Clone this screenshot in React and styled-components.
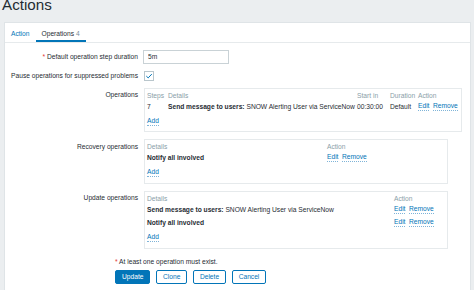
import React from 'react';
import styled, {createGlobalStyle} from 'styled-components';

const GlobalStyle = createGlobalStyle`
    html, body {
        margin: 0;
        padding: 0;
        background: #ebeef0;
    }
    body {
        font-family: "Liberation Sans", Arial, sans-serif;
        font-size: 6.67px;
        line-height: 9px;
        color: #1f2c33;
        overflow: hidden;
    }
`;

const operations = [
    {
        step: '7',
        action: 'Send message to users:',
        target: 'SNOW Alerting User via ServiceNow',
        start: '00:30:00',
        duration: 'Default'
    }
];

const recovery = [{action: 'Notify all involved'}];

const update = [
    {action: 'Send message to users:', target: 'SNOW Alerting User via ServiceNow'},
    {action: 'Notify all involved'}
];

const App = () => {
    return (
        <React.Fragment>
            <GlobalStyle/>
            <Header>
                <Title>Actions</Title>
            </Header>
            <Panel>
                <TabBar>
                    <Tab>Action</Tab>
                    <Tab $active>Operations <Count>4</Count></Tab>
                </TabBar>
                <Form>
                    <Label><Required>*</Required> Default operation step duration</Label>
                    <Field>
                        <TextInput defaultValue="5m"/>
                    </Field>

                    <Label>Pause operations for suppressed problems</Label>
                    <Field>
                        <CheckBox>
                            <svg width="8" height="8" viewBox="0 0 8 8">
                                <path d="M1.3 4.1 L3.2 5.9 L6.8 2.1" fill="none" stroke="#0275b8" strokeWidth="1"/>
                            </svg>
                        </CheckBox>
                    </Field>

                    <Label $top>Operations</Label>
                    <Field>
                        <OpBox $width={318}>
                            <HeadRow $cols="21px 189px 33px 28px 1fr">
                                <span>Steps</span>
                                <span>Details</span>
                                <span>Start in</span>
                                <span>Duration</span>
                                <span>Action</span>
                            </HeadRow>
                            {operations.map((op, i) => (
                                <DataRow key={i} $cols="21px 189px 33px 28px 1fr">
                                    <span>{op.step}</span>
                                    <span><b>{op.action}</b> {op.target}</span>
                                    <span>{op.start}</span>
                                    <span>{op.duration}</span>
                                    <LinkGroup>
                                        <LinkButton>Edit</LinkButton>
                                        <LinkButton>Remove</LinkButton>
                                    </LinkGroup>
                                </DataRow>
                            ))}
                            <AddRow><LinkButton>Add</LinkButton></AddRow>
                        </OpBox>
                    </Field>

                    <Label $top>Recovery operations</Label>
                    <Field>
                        <OpBox $width={304}>
                            <HeadRow $cols="180px 1fr">
                                <span>Details</span>
                                <span>Action</span>
                            </HeadRow>
                            {recovery.map((op, i) => (
                                <DataRow key={i} $cols="180px 1fr">
                                    <span><b>{op.action}</b></span>
                                    <LinkGroup>
                                        <LinkButton>Edit</LinkButton>
                                        <LinkButton>Remove</LinkButton>
                                    </LinkGroup>
                                </DataRow>
                            ))}
                            <AddRow><LinkButton>Add</LinkButton></AddRow>
                        </OpBox>
                    </Field>

                    <Label $top>Update operations</Label>
                    <Field>
                        <OpBox $width={304}>
                            <HeadRow $cols="247px 1fr">
                                <span>Details</span>
                                <span>Action</span>
                            </HeadRow>
                            {update.map((op, i) => (
                                <DataRow key={i} $cols="247px 1fr">
                                    <span><b>{op.action}</b>{op.target && ` ${op.target}`}</span>
                                    <LinkGroup>
                                        <LinkButton>Edit</LinkButton>
                                        <LinkButton>Remove</LinkButton>
                                    </LinkGroup>
                                </DataRow>
                            ))}
                            <AddRow><LinkButton>Add</LinkButton></AddRow>
                        </OpBox>
                    </Field>
                </Form>
                <Footer>
                    <Note><Required>*</Required> At least one operation must exist.</Note>
                    <ButtonRow>
                        <Button $primary>Update</Button>
                        <Button>Clone</Button>
                        <Button>Delete</Button>
                        <Button>Cancel</Button>
                    </ButtonRow>
                </Footer>
            </Panel>
        </React.Fragment>
    );
};

const Header = styled.div`
    display: flow-root;
    height: 21.5px;
    padding-left: 2px;
`;

const Title = styled.h1`
    margin: -2.3px 0 0 0;
    font-size: 15.2px;
    line-height: 13px;
    font-weight: normal;
    color: #1f2c33;
`;

const Panel = styled.div`
    box-sizing: border-box;
    margin: 0 3px 0 4px;
    min-height: 268.5px;
    background: #ffffff;
    border: 1px solid #dfe4e7;
    border-bottom: 0;
`;

const TabBar = styled.div`
    display: flex;
    padding-top: 4px;
    border-bottom: 1px solid #e6eaec;
`;

const Tab = styled.div`
    height: 13px;
    line-height: 13px;
    padding: 0 6px;
    border-bottom: 2px solid ${p => p.$active ? '#0275b8' : 'transparent'};
    color: ${p => p.$active ? '#1f2c33' : '#0275b8'};
`;

const Count = styled.span`
    color: #768d99;
`;

const Form = styled.div`
    display: grid;
    grid-template-columns: 133px 1fr;
    column-gap: 6px;
    row-gap: 7px;
    padding-top: 7px;
`;

const Label = styled.div`
    text-align: right;
    align-self: ${p => p.$top ? 'start' : 'center'};
    padding-top: ${p => p.$top ? '2.5px' : '0'};
    white-space: nowrap;
`;

const Required = styled.span`
    color: #e33734;
`;

const Field = styled.div`
    display: flex;
    align-items: center;
`;

const TextInput = styled.input`
    box-sizing: border-box;
    width: 86px;
    height: 14px;
    margin: 0 0 0 -1px;
    padding: 0 4px;
    border: 1px solid #c9d2d6;
    border-radius: 0;
    font-family: inherit;
    font-size: 6.67px;
    color: #1f2c33;
    outline: none;
`;

const CheckBox = styled.span`
    box-sizing: border-box;
    display: flex;
    align-items: center;
    justify-content: center;
    width: 10px;
    height: 10px;
    border: 1px solid #b9c6cc;
    background: #ffffff;
`;

const OpBox = styled.div`
    box-sizing: border-box;
    width: ${p => p.$width}px;
    padding: 2px 3px 2px 2px;
    border: 1px solid #e6eaec;
`;

const HeadRow = styled.div`
    display: grid;
    grid-template-columns: ${p => p.$cols};
    height: 9px;
    align-items: center;
    color: #8a9ea8;
    white-space: nowrap;
`;

const DataRow = styled.div`
    display: grid;
    grid-template-columns: ${p => p.$cols};
    height: 13.5px;
    align-items: center;
    white-space: nowrap;
`;

const LinkGroup = styled.span`
    display: flex;
    gap: 3.5px;
`;

const LinkButton = styled.span`
    color: #0275b8;
    border-bottom: 1px dotted #7fb4d8;
    line-height: 8px;
`;

const AddRow = styled.div`
    display: flex;
    align-items: center;
    height: 16px;
`;

const Footer = styled.div`
    padding: 8px 0 0 110px;
`;

const Note = styled.div`
    height: 9px;
    margin-bottom: 4.5px;
`;

const ButtonRow = styled.div`
    display: flex;
    gap: 5.5px;
`;

const Button = styled.button`
    box-sizing: border-box;
    height: 14px;
    margin: 0;
    padding: 0 6px;
    border: 1px solid #0275b8;
    border-radius: 2px;
    background: ${p => p.$primary ? '#0275b8' : '#ffffff'};
    color: ${p => p.$primary ? '#ffffff' : '#0275b8'};
    font-family: inherit;
    font-size: 6.67px;
    line-height: 12px;
`;

export default App;
